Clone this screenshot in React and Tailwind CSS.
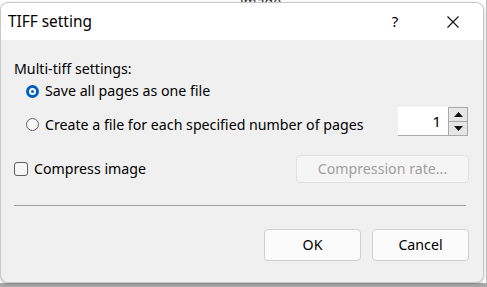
import React, { useState } from 'react';

function Radio({ checked, label, onClick }) {
    return (
        <button type="button" onClick={onClick} className="flex items-center gap-[6px] text-left">
            {checked ? (
                <span className="w-[13px] h-[13px] rounded-full bg-[#005fb8] flex items-center justify-center">
                    <span className="w-[7px] h-[7px] rounded-full bg-white flex items-center justify-center">
                        <span className="w-[3px] h-[3px] rounded-full bg-[#005fb8]" />
                    </span>
                </span>
            ) : (
                <span className="w-[13px] h-[13px] rounded-full border border-[#5f5f5f] bg-[#f7f7f7]" />
            )}
            <span>{label}</span>
        </button>
    );
}

export default function App() {
    const [mode, setMode] = useState('one');
    const [pages, setPages] = useState(1);
    const [compress, setCompress] = useState(false);

    return (
        <div className="w-[487px] h-[287px] bg-white overflow-hidden relative text-[14.2px] text-black" style={{ fontFamily: '"Noto Sans", "Open Sans", sans-serif' }}>
            {/* backdrop bits from the window behind */}
            <div className="absolute left-[240px] top-[-9px] text-[14px] text-[#333]">image</div>
            <div className="absolute right-0 top-0 w-[1px] h-full bg-[#bdbdbd]" />
            <div className="absolute left-0 bottom-0 w-full h-[4px] bg-[#a9a9a9]" />

            <div className="relative mt-[2px] w-[484px] h-[281px] rounded-[8px] border border-[#c8c8c8] bg-[#f0f0f0] overflow-hidden flex flex-col shadow-[0_1px_3px_rgba(0,0,0,0.25)]">
                {/* title bar */}
                <div className="h-[37px] bg-white flex items-center pl-[7px] shrink-0">
                    <div className="text-[15.4px] flex-1">TIFF setting</div>
                    <div className="w-[58px] flex justify-center text-[15px]">?</div>
                    <div className="w-[58px] flex justify-center mr-[1px]">
                        <svg width="12" height="12" viewBox="0 0 12 12" fill="none" stroke="#111" strokeWidth="1.1">
                            <path d="M0.5 0.5 L11.5 11.5 M11.5 0.5 L0.5 11.5" />
                        </svg>
                    </div>
                </div>

                {/* body */}
                <div className="flex-1 pl-[13px] pr-[16px] pt-[19px]">
                    <div className="leading-[20px]">Multi-tiff settings:</div>
                    <div className="pl-[12px] mt-[2px] leading-[20px]">
                        <Radio checked={mode === 'one'} label="Save all pages as one file" onClick={() => setMode('one')} />
                    </div>
                    <div className="flex items-center justify-between pl-[12px] mt-[6px]">
                        <div className="mt-[6px]">
                            <Radio checked={mode === 'each'} label="Create a file for each specified number of pages" onClick={() => setMode('each')} />
                        </div>
                        <div className="flex h-[29px] mr-[-1px]">
                            <div className="w-[50px] bg-white border-b border-[#a8a8a8] flex items-center justify-end pr-[7px] text-[15px]">{pages}</div>
                            <div className="w-[20px] border border-[#a8a8a8] bg-[#e6e6e6] flex flex-col">
                                <button type="button" onClick={() => setPages(pages + 1)} className="flex-1 flex items-center justify-center border-b border-[#a8a8a8]">
                                    <svg width="9" height="5" viewBox="0 0 9 5"><path d="M4.5 0 L9 5 L0 5 Z" fill="#111" /></svg>
                                </button>
                                <button type="button" onClick={() => setPages(Math.max(1, pages - 1))} className="flex-1 flex items-center justify-center">
                                    <svg width="9" height="5" viewBox="0 0 9 5"><path d="M0 0 L9 0 L4.5 5 Z" fill="#111" /></svg>
                                </button>
                            </div>
                        </div>
                    </div>

                    <div className="flex items-center justify-between mt-[19px]">
                        <button type="button" onClick={() => setCompress(!compress)} className="flex items-center gap-[6px]">
                            <span className="w-[14px] h-[14px] rounded-[3px] border border-[#5f5f5f] bg-[#f7f7f7] flex items-center justify-center">
                                {compress && <span className="text-[10px] leading-none">✓</span>}
                            </span>
                            <span>Compress image</span>
                        </button>
                        <button type="button" disabled className="w-[173px] h-[28px] rounded-[4px] border border-[#e0e0e0] bg-[#f5f5f5] text-[#a0a0a0] mr-[-2px]">
                            Compression rate...
                        </button>
                    </div>

                    <div className="h-[1px] bg-[#a0a0a0] mt-[22px] mr-[1px]" />

                    <div className="flex justify-end gap-[11px] mt-[23px] mr-[-2px]">
                        <button type="button" className="w-[97px] h-[32px] rounded-[4px] border border-[#d0d0d0] bg-[#fbfbfb]">OK</button>
                        <button type="button" className="w-[97px] h-[32px] rounded-[4px] border border-[#d0d0d0] bg-[#fbfbfb]">Cancel</button>
                    </div>
                </div>
            </div>
        </div>
    );
}
